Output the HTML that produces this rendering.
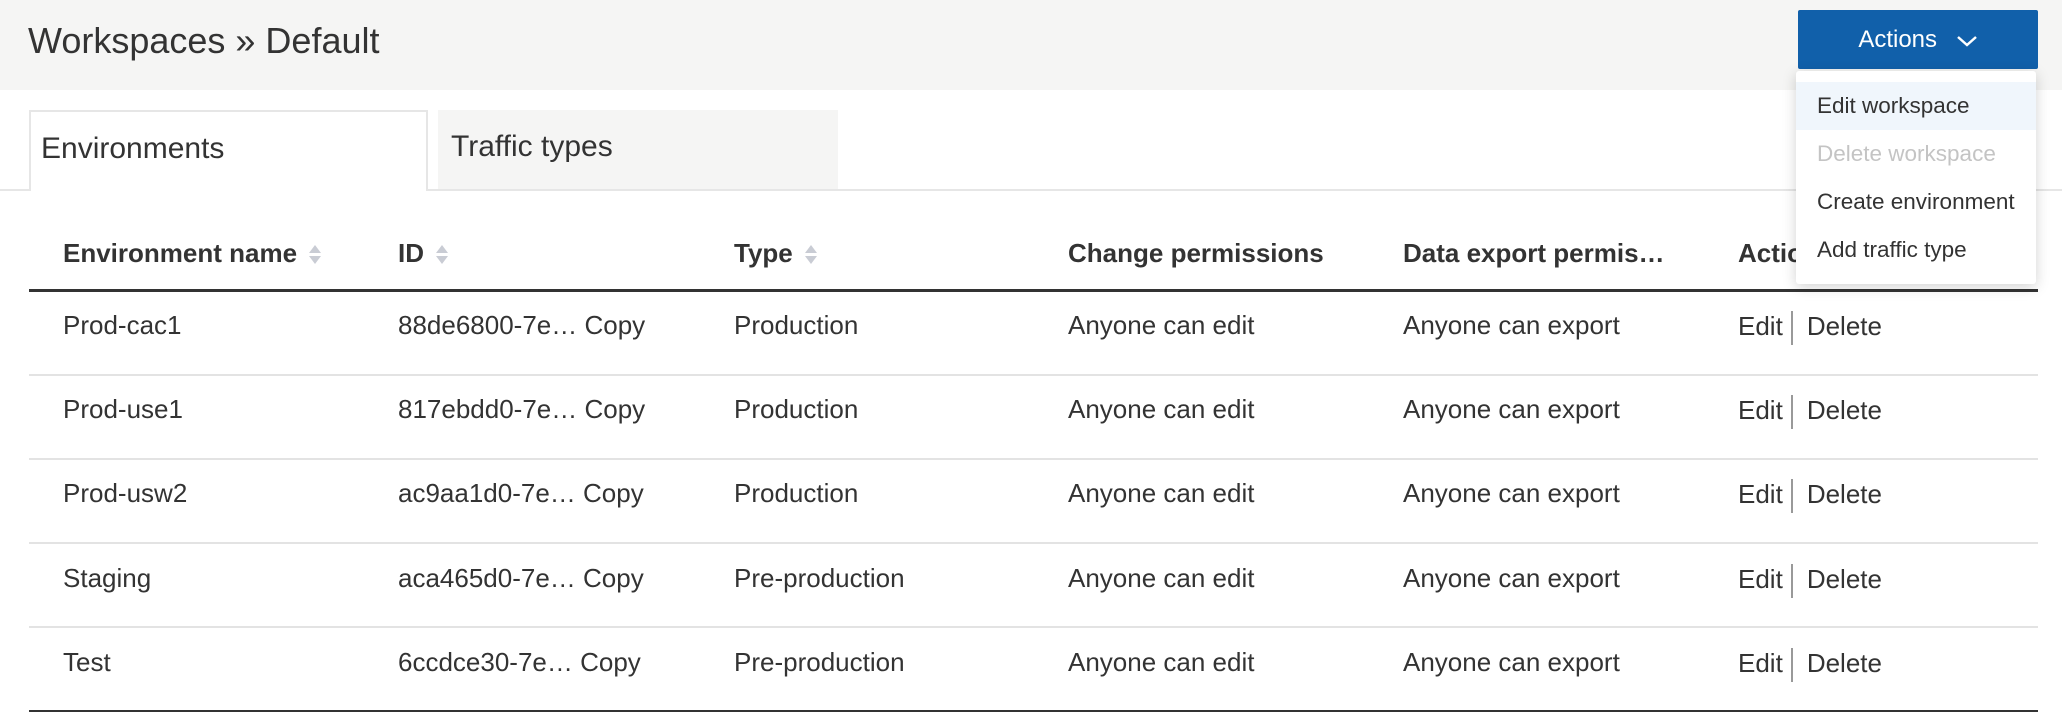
<!DOCTYPE html>
<html><head><meta charset="utf-8"><style>
*{margin:0;padding:0;box-sizing:border-box}
body{width:2062px;height:726px;background:#fff;font-family:"Liberation Sans",sans-serif;color:#333;position:relative;overflow:hidden}
.hdr{position:absolute;left:0;top:0;width:2062px;height:90px;background:#f5f5f4}
.title{position:absolute;left:28px;top:20px;font-size:36px;color:#333}
.btn{position:absolute;left:1798px;top:10px;width:240px;height:59px;background:#1160aa;border-radius:2px;color:#fff;font-size:24px;line-height:59px;text-align:center}
.tabline{position:absolute;left:0;top:189px;width:2062px;height:2px;background:#e6e6e6}
.tab1{position:absolute;left:29px;top:110px;width:399px;height:81px;background:#fff;border:2px solid #e6e6e6;border-bottom:none;font-size:30px;padding:20px 0 0 10px}
.tab2{position:absolute;left:438px;top:110px;width:400px;height:79px;background:#f5f5f4;font-size:30px;padding:20px 0 0 13px}
.th{position:absolute;top:238px;font-size:26px;font-weight:bold;color:#333;white-space:nowrap}
.sort{display:inline-block;vertical-align:middle;margin-left:12px;width:12px;height:22px;position:relative}
.sort:before{content:"";position:absolute;left:0;top:1px;border:6px solid transparent;border-bottom:8px solid #c9ccd4;border-top:none}
.sort:after{content:"";position:absolute;left:0;top:12px;border:6px solid transparent;border-top:8px solid #c9ccd4;border-bottom:none}
.thick{position:absolute;left:29px;top:289px;width:2009px;height:3px;background:#333}
.sep{position:absolute;left:29px;width:2009px;height:2px;background:#e3e3e3}
.td{position:absolute;font-size:26px;color:#333;white-space:nowrap}
.bar{display:inline-block;width:2px;height:34px;background:#999;vertical-align:middle;margin:0 14px 0 8px}
.menu{position:absolute;left:1796px;top:71px;width:240px;height:213px;background:#fff;border-radius:3px;box-shadow:0 3px 14px rgba(0,0,0,.18)}
.mi{position:absolute;left:0;width:240px;height:48px;font-size:22.5px;padding-left:21px;line-height:48px;color:#333}
</style></head><body>
<div class="hdr"></div>
<div class="title">Workspaces » Default</div>
<div class="btn">Actions <svg width="22" height="14" viewBox="0 0 22 14" style="margin-left:12px;vertical-align:middle"><path d="M2 3 L11 11 L20 3" stroke="#fff" stroke-width="2.5" fill="none"/></svg></div>
<div class="tabline"></div>
<div class="tab1">Environments</div>
<div class="tab2">Traffic types</div>

<div class="th" style="left:63px">Environment name<span class="sort"></span></div>
<div class="th" style="left:398px">ID<span class="sort"></span></div>
<div class="th" style="left:734px">Type<span class="sort"></span></div>
<div class="th" style="left:1068px">Change permissions</div>
<div class="th" style="left:1403px">Data export permis…</div>
<div class="th" style="left:1738px">Actions</div>
<div class="thick"></div>

<div class="sep" style="top:374px"></div>
<div class="sep" style="top:458px"></div>
<div class="sep" style="top:542px"></div>
<div class="sep" style="top:626px"></div>
<div class="thick" style="top:710px;height:2px"></div>

<div class="td" style="left:63px;top:310px">Prod-cac1</div>
<div class="td" style="left:398px;top:310px">88de6800-7e… Copy</div>
<div class="td" style="left:734px;top:310px">Production</div>
<div class="td" style="left:1068px;top:310px">Anyone can edit</div>
<div class="td" style="left:1403px;top:310px">Anyone can export</div>
<div class="td" style="left:1738px;top:311px">Edit<span class="bar"></span>Delete</div>

<div class="td" style="left:63px;top:394px">Prod-use1</div>
<div class="td" style="left:398px;top:394px">817ebdd0-7e… Copy</div>
<div class="td" style="left:734px;top:394px">Production</div>
<div class="td" style="left:1068px;top:394px">Anyone can edit</div>
<div class="td" style="left:1403px;top:394px">Anyone can export</div>
<div class="td" style="left:1738px;top:395px">Edit<span class="bar"></span>Delete</div>

<div class="td" style="left:63px;top:478px">Prod-usw2</div>
<div class="td" style="left:398px;top:478px">ac9aa1d0-7e… Copy</div>
<div class="td" style="left:734px;top:478px">Production</div>
<div class="td" style="left:1068px;top:478px">Anyone can edit</div>
<div class="td" style="left:1403px;top:478px">Anyone can export</div>
<div class="td" style="left:1738px;top:479px">Edit<span class="bar"></span>Delete</div>

<div class="td" style="left:63px;top:563px">Staging</div>
<div class="td" style="left:398px;top:563px">aca465d0-7e… Copy</div>
<div class="td" style="left:734px;top:563px">Pre-production</div>
<div class="td" style="left:1068px;top:563px">Anyone can edit</div>
<div class="td" style="left:1403px;top:563px">Anyone can export</div>
<div class="td" style="left:1738px;top:564px">Edit<span class="bar"></span>Delete</div>

<div class="td" style="left:63px;top:647px">Test</div>
<div class="td" style="left:398px;top:647px">6ccdce30-7e… Copy</div>
<div class="td" style="left:734px;top:647px">Pre-production</div>
<div class="td" style="left:1068px;top:647px">Anyone can edit</div>
<div class="td" style="left:1403px;top:647px">Anyone can export</div>
<div class="td" style="left:1738px;top:648px">Edit<span class="bar"></span>Delete</div>

<div class="menu">
<div class="mi" style="top:11px;background:#f0f6fc">Edit workspace</div>
<div class="mi" style="top:59px;color:#c4c4c4">Delete workspace</div>
<div class="mi" style="top:107px">Create environment</div>
<div class="mi" style="top:155px">Add traffic type</div>
</div>
</body></html>
